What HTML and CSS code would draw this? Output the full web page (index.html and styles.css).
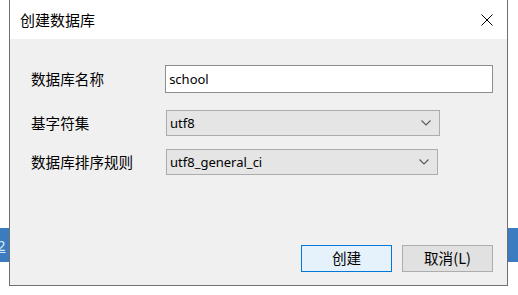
FILE: index.html
```html
<!DOCTYPE html>
<html lang="zh-CN">
<head>
<meta charset="utf-8">
<title>创建数据库</title>
<link rel="stylesheet" href="styles.css">
</head>
<body>
<div class="screen">
  <div class="side side-left"><div class="tab tab-left"><span class="tab-num">2</span></div></div>
  <div class="dialog">
    <div class="titlebar">
      <span class="title">创建数据库</span>
      <span class="close" aria-label="关闭">
        <svg width="12" height="12" viewBox="0 0 12 12"><path d="M0.5 0.5 L11.5 11.5 M11.5 0.5 L0.5 11.5" stroke="#000" stroke-width="1" fill="none"/></svg>
      </span>
    </div>
    <div class="body">
      <div class="form">
        <div class="row row-1">
          <span class="label">数据库名称</span>
          <div class="input">school</div>
        </div>
        <div class="row row-2">
          <span class="label">基字符集</span>
          <div class="select select-1"><span>utf8</span>
            <svg class="chev" width="10" height="6" viewBox="0 0 10 6"><path d="M0.5 0.5 L5 5 L9.5 0.5" stroke="#5a5a5a" stroke-width="1.1" fill="none"/></svg>
          </div>
        </div>
        <div class="row row-3">
          <span class="label">数据库排序规则</span>
          <div class="select select-2"><span>utf8_general_ci</span>
            <svg class="chev" width="10" height="6" viewBox="0 0 10 6"><path d="M0.5 0.5 L5 5 L9.5 0.5" stroke="#5a5a5a" stroke-width="1.1" fill="none"/></svg>
          </div>
        </div>
      </div>
      <div class="buttons">
        <div class="btn btn-primary">创建</div>
        <div class="btn">取消(<u>L</u>)</div>
      </div>
    </div>
  </div>
  <div class="side side-right"><div class="tab tab-right"></div></div>
</div>
</body>
</html>
```
FILE: styles.css
```css
html, body {
  margin: 0;
  padding: 0;
  background: #ffffff;
}
body {
  width: 518px;
  height: 295px;
  overflow: hidden;
  font-family: "Noto Sans", "Noto Sans CJK SC", sans-serif;
  color: #000;
}
.screen {
  display: flex;
  align-items: flex-start;
}
.side-left {
  width: 9px;
}
.side-right {
  width: 10px;
}
.tab {
  margin-top: 228px;
  height: 34px;
  background: #3b7cc0;
}
.tab-left {
  display: flex;
  align-items: center;
  overflow: hidden;
}
.tab-num {
  color: #d6e6f6;
  font-size: 15px;
  line-height: 1;
  text-decoration: underline;
  margin-left: -3px;
}
.dialog {
  width: 497px;
  height: 285px;
  border-left: 1px solid #6f6f6f;
  border-right: 1px solid #6f6f6f;
  border-bottom: 1px solid #6f6f6f;
  display: flex;
  flex-direction: column;
}
.titlebar {
  height: 39px;
  background: #fff;
  display: flex;
  align-items: center;
  justify-content: space-between;
  padding: 0 14px 0 10px;
}
.title {
  font-family: "Noto Sans CJK SC", sans-serif;
  font-size: 15px;
  line-height: 1;
}
.close {
  display: flex;
  width: 12px;
  height: 12px;
  margin-top: 1px;
}
.body {
  flex: 1;
  background: #f0f0f0;
  display: flex;
  flex-direction: column;
  justify-content: space-between;
  padding: 26px 14px 13px 21px;
}
.form {
  display: flex;
  flex-direction: column;
}
.row {
  display: flex;
  align-items: center;
}
.row-2 { margin-top: 17px; }
.row-3 { margin-top: 13px; }
.label {
  width: 135px;
  font-family: "Noto Sans CJK SC", sans-serif;
  font-size: 14.6px;
  line-height: 1;
}
.input {
  box-sizing: border-box;
  width: 330px;
  height: 28px;
  background: #fff;
  border: 1px solid #8e8e8e;
  font-size: 13px;
  display: flex;
  align-items: center;
  padding-left: 3px;
}
.select {
  box-sizing: border-box;
  height: 26px;
  background: #e5e5e5;
  border: 1px solid #acacac;
  font-size: 13px;
  display: flex;
  align-items: center;
  justify-content: space-between;
  padding: 0 8px 0 3px;
}
.select-1 { width: 274px; }
.select-2 { width: 272px; }
.chev {
  display: block;
}
.buttons {
  display: flex;
  justify-content: flex-end;
  gap: 10px;
}
.btn {
  box-sizing: border-box;
  width: 91px;
  height: 27px;
  background: #e1e1e1;
  border: 1px solid #adadad;
  display: flex;
  align-items: center;
  justify-content: center;
  font-family: "Noto Sans CJK SC", sans-serif;
  font-size: 14.6px;
  line-height: 1;
}
.btn u {
  text-decoration: none;
}
.btn-primary {
  background: #e5f1fb;
  border: 1px solid #0078d7;
}
```
